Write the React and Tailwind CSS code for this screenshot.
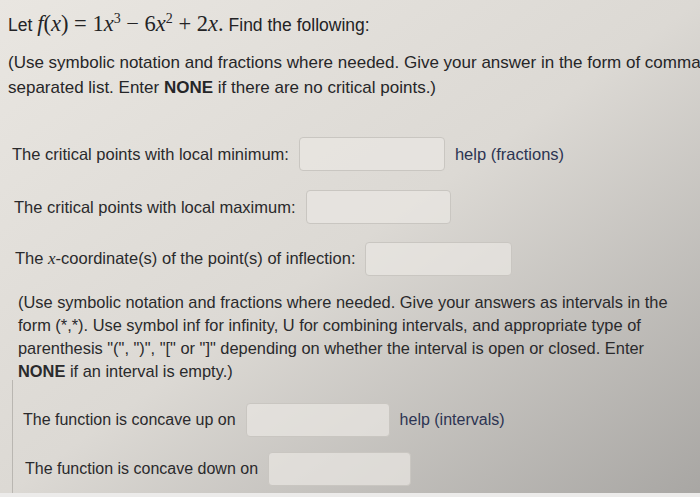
import React from "react";

function Field({ width = "w-[146px]" }) {
  return (
    <div
      className={`${width} h-[34px] shrink-0 rounded-[4px] border border-[#c9c6c1] bg-[#e9e7e2]/70`}
    />
  );
}

function Row({ label, pad, inputWidth, help, size = "text-[16.5px]" }) {
  return (
    <div className={`flex items-center ${pad}`}>
      <span className={`${size} text-[#2a2a2c] whitespace-nowrap`}>{label}</span>
      <div className="ml-[10px]">
        <Field width={inputWidth} />
      </div>
      {help && (
        <span className={`ml-[10px] ${size} text-[#2c3452] whitespace-nowrap`}>{help}</span>
      )}
    </div>
  );
}

export default function App() {
  const mathFont = { fontFamily: '"Liberation Serif", "DejaVu Serif", serif' };

  return (
    <div
      className="relative w-[700px] h-[497px] overflow-hidden bg-linear-to-br from-[#e9e6e1] via-[#dcd9d4] to-[#a8a6a3]"
      style={{ fontFamily: '"Liberation Sans", Arial, Helvetica, sans-serif' }}
    >
      <div className="flex flex-col">
        {/* Question */}
        <div className="pl-[8px] pt-[11px] text-[17.5px] text-[#232325] leading-[26px] whitespace-nowrap">
          Let{" "}
          <span className="text-[22.5px] leading-[26px]" style={mathFont}>
            <i>f</i>(<i>x</i>) = 1<i>x</i>
            <sup className="text-[14px] -top-[0.55em]">3</sup> − 6<i>x</i>
            <sup className="text-[14px] -top-[0.55em]">2</sup> + 2<i>x</i>.
          </span>{" "}
          Find the following:
        </div>

        <div className="pl-[8px] pt-[12px] text-[17px] leading-[25px] text-[#262628] whitespace-nowrap">
          (Use symbolic notation and fractions where needed. Give your answer in the form of comma
          <br />
          separated list. Enter <b>NONE</b> if there are no critical points.)
        </div>

        <div className="pt-[37px]">
          <Row
            label="The critical points with local minimum:"
            pad="pl-[12px]"
            help="help (fractions)"
          />
        </div>
        <div className="pt-[19px]">
          <Row
            label="The critical points with local maximum:"
            pad="pl-[14px]"
            inputWidth="w-[145px]"
          />
        </div>
        <div className="pt-[18px]">
          <Row
            label={
              <>
                The <span style={mathFont} className="italic text-[17px]">x</span>-coordinate(s) of the point(s) of inflection:
              </>
            }
            pad="pl-[15px]"
            inputWidth="w-[147px]"
          />
        </div>

        <div className="pl-[18px] pt-[15px] text-[16.4px] leading-[23px] text-[#2a2a2c] whitespace-nowrap">
          (Use symbolic notation and fractions where needed. Give your answers as intervals in the
          <br />
          form (*,*). Use symbol inf for infinity, U for combining intervals, and appropriate type of
          <br />
          parenthesis "(", ")", "[" or "]" depending on whether the interval is open or closed. Enter
          <br />
          <b>NONE</b> if an interval is empty.)
        </div>

        <div className="pt-[20px]">
          <Row
            label="The function is concave up on"
            pad="pl-[23px]"
            inputWidth="w-[144px]"
            help="help (intervals)"
            size="text-[16px]"
          />
        </div>
        <div className="pt-[15px]">
          <Row
            label="The function is concave down on"
            pad="pl-[25px]"
            inputWidth="w-[143px]"
            size="text-[16px]"
          />
        </div>
      </div>

      {/* screen edge details */}
      <div className="absolute left-[12px] top-[380px] bottom-[4px] w-px bg-[#b9b6b1]" />
      <div className="absolute left-0 right-0 bottom-0 h-[4px] bg-[#ecebea]" />
    </div>
  );
}
